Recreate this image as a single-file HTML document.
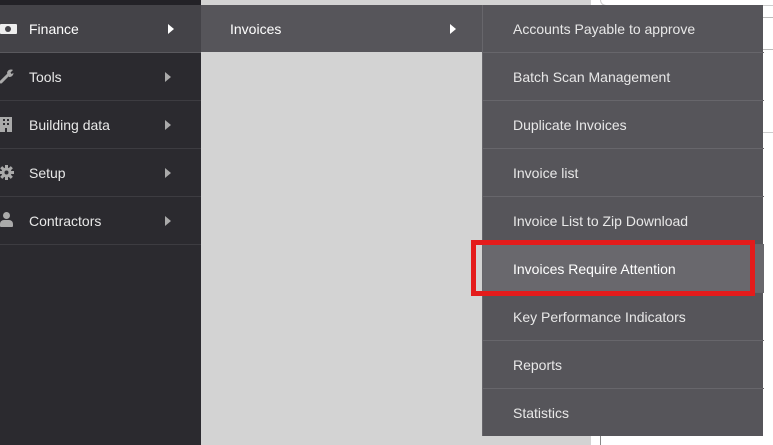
<!DOCTYPE html><html><head><style>
body{margin:0;width:773px;height:445px;overflow:hidden;background:#fff;font-family:"Liberation Sans",sans-serif;font-size:14px;position:relative}
.abs{position:absolute}
.row{position:absolute;left:0;height:47px;border-bottom:1px solid #3d3c41;color:#e8e8e8;line-height:49px;box-sizing:content-box}
.arr{position:absolute;width:0;height:0;border-top:5px solid transparent;border-bottom:5px solid transparent;border-left:6px solid #aaa;top:19px}
.m3 .row{left:0;width:281px;border-bottom:1px solid #67666b;padding-left:30px;box-sizing:border-box;height:48px}
svg{position:absolute}
</style></head><body>
<div class="abs" style="left:0;top:0;width:201px;height:445px;background:#2b2a2f"></div>
<div class="abs" style="left:0;top:0;width:201px;height:5px;background:#232227"></div>
<div class="abs" style="left:201px;top:0;width:390px;height:445px;background:#d3d3d3"></div>
<div class="abs" style="left:591px;top:0;width:182px;height:445px;background:#fff"></div>
<div class="abs" style="left:600px;top:0;width:173px;height:5px;border:1px solid #ccc;border-top:0;border-radius:0 0 0 6px"></div>
<div class="abs" style="left:763px;top:17px;width:10px;height:1px;background:#bbb"></div>
<div class="abs" style="left:763px;top:49px;width:10px;height:1px;background:#bbb"></div>
<div class="abs" style="left:763px;top:132px;width:10px;height:1px;background:#ccc"></div>
<div class="abs" style="left:600px;top:436px;width:1px;height:9px;background:#888"></div>

<div class="abs" style="left:0;top:5px;width:201px">
<div class="row" style="top:0;width:201px;background:#444348;color:#fff;border-bottom-color:#5a595e"><span class="abs" style="left:0;top:19px;width:17px;height:10px;background:#eee;border-radius:1px"></span><span class="abs" style="left:5px;top:21px;width:6px;height:6px;background:#444348;border-radius:50%"></span><span class="abs" style="left:29px">Finance</span><span class="arr" style="left:168px;border-left-color:#fff"></span></div>
<div class="row" style="top:48px;width:201px"><svg style="left:0;top:16px" width="15" height="15" viewBox="0 0 15 15"><path d="M1 13 L8 6" stroke="#aaa" stroke-width="3" stroke-linecap="round"/><path d="M7 4 A4 4 0 0 1 13 1 L10.5 3.5 L11.5 5 L13.5 4 A4 4 0 0 1 9 8 Z" fill="#aaa"/></svg><span class="abs" style="left:29px">Tools</span><span class="arr" style="left:165px"></span></div>
<div class="row" style="top:96px;width:201px"><svg style="left:0;top:16px" width="12" height="15" viewBox="0 0 12 15"><rect x="0" y="0" width="12" height="15" fill="#aaa"/><g fill="#2b2a2f"><rect x="3" y="2" width="2" height="2"/><rect x="7" y="2" width="2" height="2"/><rect x="3" y="6" width="2" height="2"/><rect x="7" y="6" width="2" height="2"/><rect x="5" y="11" width="2" height="4"/></g></svg><span class="abs" style="left:29px">Building data</span><span class="arr" style="left:165px"></span></div>
<div class="row" style="top:144px;width:201px"><svg style="left:-1px;top:16px" width="15" height="15" viewBox="0 0 15 15"><circle cx="7.5" cy="7.5" r="5" fill="#aaa"/><g stroke="#aaa" stroke-width="3"><path d="M7.5 0V15M0 7.5H15M2.2 2.2L12.8 12.8M12.8 2.2L2.2 12.8"/></g><circle cx="7.5" cy="7.5" r="2" fill="#2b2a2f"/></svg><span class="abs" style="left:29px">Setup</span><span class="arr" style="left:165px"></span></div>
<div class="row" style="top:192px;width:201px"><span class="abs" style="left:3px;top:15px;width:7px;height:7px;background:#aaa;border-radius:50%"></span><span class="abs" style="left:0;top:23px;width:13px;height:7px;background:#aaa;border-radius:4px 4px 1px 1px"></span><span class="abs" style="left:29px">Contractors</span><span class="arr" style="left:165px"></span></div>
</div>

<div class="abs" style="left:201px;top:5px;width:281px;height:47px;background:#56555a;color:#fff;line-height:49px"><span class="abs" style="left:29px">Invoices</span><span class="arr" style="left:249px;border-left-color:#fff"></span></div>

<div class="abs m3" style="left:482px;top:5px;width:281px;height:431px;background:#56555a;border-left:1px solid #67666b;box-sizing:border-box">
<div class="row" style="top:0">Accounts Payable to approve</div>
<div class="row" style="top:48px">Batch Scan Management</div>
<div class="row" style="top:96px">Duplicate Invoices</div>
<div class="row" style="top:144px">Invoice list</div>
<div class="row" style="top:192px">Invoice List to Zip Download</div>
<div class="row" style="top:240px;background:#69686d;color:#fff">Invoices Require Attention</div>
<div class="row" style="top:288px">Key Performance Indicators</div>
<div class="row" style="top:336px">Reports</div>
<div class="row" style="top:384px;border-bottom:0">Statistics</div>
</div>
<div class="abs" style="left:471px;top:240px;width:284px;height:56px;border:5px solid #e41b1b;box-sizing:border-box"></div>
</body></html>
